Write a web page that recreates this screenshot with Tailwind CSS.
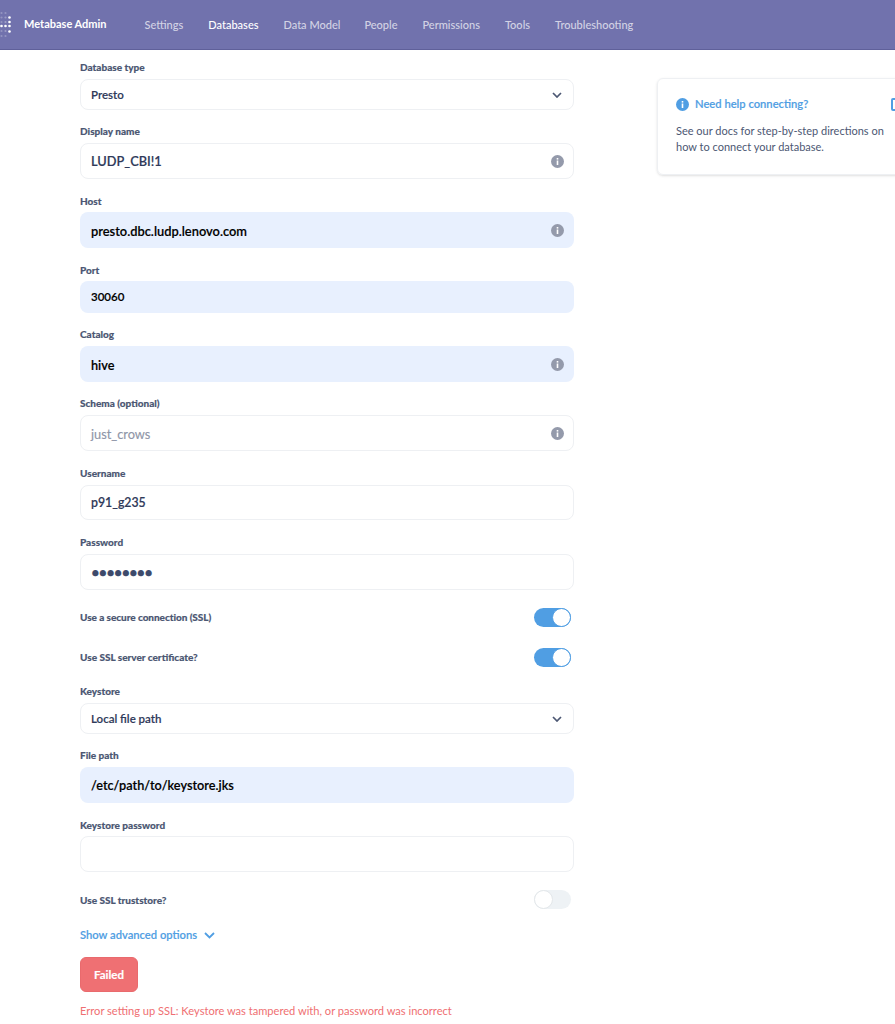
<!DOCTYPE html>
<html lang="en">
  <head>
    <meta charset="UTF-8" />
    <script src="https://cdn.jsdelivr.net/npm/@tailwindcss/browser@4"></script>
    <title>Metabase Admin</title>
  </head>
  <body class="h-[1024px] overflow-hidden bg-white font-['Lato',sans-serif] text-[#4c5773]">
    <nav class="h-[50px] bg-[#7172ad] border-b border-[#5f609a] flex items-center text-[11px] font-medium text-white/70">
      <svg class="w-[13px] h-[30px] shrink-0" viewBox="0 0 13 30" fill="#fff">
        <circle cx="1.5" cy="3" r="1.1" opacity=".25"/><circle cx="5.5" cy="3" r="1.1" opacity=".25"/>
        <circle cx="1.5" cy="7.5" r="1.1" opacity=".25"/><circle cx="5.5" cy="7.5" r="1.1" opacity=".3"/><circle cx="9.5" cy="7.5" r="1.3"/>
        <circle cx="1.5" cy="12" r="1.1" opacity=".25"/><circle cx="5.5" cy="12" r="1.1" opacity=".35"/><circle cx="9.5" cy="12" r="1.3"/>
        <circle cx="1.5" cy="16" r="1.3"/><circle cx="5.5" cy="16" r="1.3"/><circle cx="9.5" cy="16" r="1.3"/>
        <circle cx="1.5" cy="21" r="1.1" opacity=".25"/><circle cx="5.5" cy="21" r="1.1" opacity=".3"/><circle cx="9.5" cy="21.5" r="1.3"/>
        <circle cx="1.5" cy="26" r="1.1" opacity=".25"/><circle cx="5.5" cy="26" r="1.1" opacity=".25"/>
      </svg>
      <span class="ml-[11px] font-bold text-white">Metabase Admin</span>
      <span class="ml-[38px] pt-[1px]">Settings</span>
      <span class="ml-[25px] pt-[1px] text-white">Databases</span>
      <span class="ml-[25px] pt-[1px]">Data Model</span>
      <span class="ml-[24px] pt-[1px]">People</span>
      <span class="ml-[25px] pt-[1px]">Permissions</span>
      <span class="ml-[25px] pt-[1px]">Tools</span>
      <span class="ml-[25px] pt-[1px]">Troubleshooting</span>
    </nav>
    <main class="flex items-start">
      <form class="ml-[80px] w-[494px] shrink-0 pt-[9px] text-[11.5px] font-semibold [-webkit-text-stroke:0.15px]">
        <label class="block h-[16px] leading-[16px] text-[10px] font-black">Database type</label>
        <div class="mt-[4px] h-[31px] rounded-lg border border-[#eef0f3] flex items-center justify-between pl-[10px] pr-[11px] text-[#2f3a5a]">
          Presto
          <svg class="w-[10px] h-[6px]" viewBox="0 0 10 6" fill="none" stroke="#4c5773" stroke-width="1.7"><path d="M1 1l4 4 4-4"/></svg>
        </div>

        <label class="block mt-[13px] h-[16px] leading-[16px] text-[10px] font-black">Display name</label>
        <div class="mt-[4px] h-[36px] rounded-lg border border-[#eef0f3] flex items-center justify-between pl-[10px] pr-[9px] text-[12.8px] text-[#2f3a5a]">
          <span class="pt-[2px]">LUDP_CBI!1</span>
          <svg class="w-[13px] h-[13px]" viewBox="0 0 13 13"><circle cx="6.5" cy="6.5" r="6.5" fill="#949aab"/><rect x="5.7" y="5.5" width="1.6" height="4.5" fill="#fff"/><rect x="5.7" y="3" width="1.6" height="1.6" fill="#fff"/></svg>
        </div>

        <label class="block mt-[14px] h-[16px] leading-[16px] text-[10px] font-black">Host</label>
        <div class="mt-[3px] h-[36px] rounded-lg bg-[#e8f0fe] flex items-center justify-between pl-[11px] pr-[10px] text-[12.85px] text-black">
          <span class="pt-[3px]">presto.dbc.ludp.lenovo.com</span>
          <svg class="w-[13px] h-[13px]" viewBox="0 0 13 13"><circle cx="6.5" cy="6.5" r="6.5" fill="#949aab"/><rect x="5.7" y="5.5" width="1.6" height="4.5" fill="#fff"/><rect x="5.7" y="3" width="1.6" height="1.6" fill="#fff"/></svg>
        </div>

        <label class="block mt-[14px] h-[16px] leading-[16px] text-[10px] font-black">Port</label>
        <div class="mt-[3px] h-[32px] rounded-lg bg-[#e8f0fe] flex items-center pl-[11px] text-[11.5px] text-black">30060</div>

        <label class="block mt-[13px] h-[16px] leading-[16px] text-[10px] font-black">Catalog</label>
        <div class="mt-[4px] h-[36px] rounded-lg bg-[#e8f0fe] flex items-center justify-between pl-[11px] pr-[10px] text-[12.7px] text-black">
          <span class="pt-[3px]">hive</span>
          <svg class="w-[13px] h-[13px]" viewBox="0 0 13 13"><circle cx="6.5" cy="6.5" r="6.5" fill="#949aab"/><rect x="5.7" y="5.5" width="1.6" height="4.5" fill="#fff"/><rect x="5.7" y="3" width="1.6" height="1.6" fill="#fff"/></svg>
        </div>

        <label class="block mt-[13px] h-[16px] leading-[16px] text-[10px] font-black">Schema (optional)</label>
        <div class="mt-[4px] h-[36px] rounded-lg border border-[#eef0f3] flex items-center justify-between pl-[10px] pr-[9px] text-[12.8px] font-normal text-[#8f96a8]">
          <span class="pt-[3px]">just_crows</span>
          <svg class="w-[13px] h-[13px]" viewBox="0 0 13 13"><circle cx="6.5" cy="6.5" r="6.5" fill="#949aab"/><rect x="5.7" y="5.5" width="1.6" height="4.5" fill="#fff"/><rect x="5.7" y="3" width="1.6" height="1.6" fill="#fff"/></svg>
        </div>

        <label class="block mt-[14px] h-[16px] leading-[16px] text-[10px] font-black">Username</label>
        <div class="mt-[4px] h-[35px] rounded-lg border border-[#eef0f3] flex items-center pl-[10px] text-[12.3px] text-[#2f3a5a]"><span class="pt-[2px]">p91_g235</span></div>

        <label class="block mt-[14px] h-[16px] leading-[16px] text-[10px] font-black">Password</label>
        <div class="mt-[4px] h-[36px] rounded-lg border border-[#eef0f3] flex items-center pl-[10px] text-[15px] tracking-[-1.1px] text-[#3d4a6b]">••••••••</div>

        <div class="mt-[18px] h-[19px] flex items-center justify-between pr-[3px]">
          <span class="text-[10px] font-black tracking-[-0.05px]">Use a secure connection (SSL)</span>
          <span class="w-[37px] h-[19px] rounded-full bg-[#509ee3] flex justify-end"><span class="w-[19px] h-[19px] rounded-full bg-white border border-[#509ee3]"></span></span>
        </div>
        <div class="mt-[21px] h-[19px] flex items-center justify-between pr-[3px]">
          <span class="text-[10px] font-black">Use SSL server certificate?</span>
          <span class="w-[37px] h-[19px] rounded-full bg-[#509ee3] flex justify-end"><span class="w-[19px] h-[19px] rounded-full bg-white border border-[#509ee3]"></span></span>
        </div>

        <label class="block mt-[16px] h-[16px] leading-[16px] text-[10px] font-black">Keystore</label>
        <div class="mt-[4px] h-[31px] rounded-lg border border-[#eef0f3] flex items-center justify-between pl-[10px] pr-[11px] text-[#2f3a5a]">
          Local file path
          <svg class="w-[10px] h-[6px]" viewBox="0 0 10 6" fill="none" stroke="#4c5773" stroke-width="1.7"><path d="M1 1l4 4 4-4"/></svg>
        </div>

        <label class="block mt-[13px] h-[16px] leading-[16px] text-[10px] font-black">File path</label>
        <div class="mt-[4px] h-[36px] rounded-lg bg-[#e8f0fe] flex items-center pl-[11px] text-[12.7px] text-black"><span class="pt-[2px]">/etc/path/to/keystore.jks</span></div>

        <label class="block mt-[14px] h-[16px] leading-[16px] text-[10px] font-black">Keystore password</label>
        <div class="mt-[3px] h-[36px] rounded-lg border border-[#eef0f3]"></div>

        <div class="mt-[18px] h-[19px] flex items-center justify-between pr-[3px]">
          <span class="pt-[1px] text-[10px] font-black">Use SSL truststore?</span>
          <span class="w-[37px] h-[19px] rounded-full bg-[#eef2f5] flex"><span class="w-[19px] h-[19px] rounded-full bg-white border border-[#e3e7ea]"></span></span>
        </div>

        <div class="mt-[18px] flex items-center gap-[7px] text-[11.2px] font-semibold text-[#509ee3] leading-[16px]">
          Show advanced options
          <svg class="w-[11px] h-[7px]" viewBox="0 0 11 7" fill="none" stroke="#509ee3" stroke-width="1.8"><path d="M1 1l4.5 4.5L10 1"/></svg>
        </div>

        <div class="mt-[14px] w-[58px] h-[35px] rounded-md bg-[#ef7073] border border-[#e96a6d] flex items-center justify-center text-[11.5px] font-bold text-white">Failed</div>

        <p class="mt-[11px] text-[11.1px] font-normal leading-[16px] text-[#ef6f72] [-webkit-text-stroke:0px]">Error setting up SSL: Keystore was tampered with, or password was incorrect</p>
      </form>
      <aside class="ml-[83px] mt-[28px] w-[260px] h-[97px] shrink-0 rounded-md border border-[#eef0f3] shadow-sm pl-[18px] pt-[17px]">
        <div class="flex items-center text-[11.2px] font-semibold text-[#509ee3] leading-[16px] [-webkit-text-stroke:0.15px]">
          <svg class="w-[13px] h-[13px] mr-[6px]" viewBox="0 0 13 13"><circle cx="6.5" cy="6.5" r="6.5" fill="#509ee3"/><rect x="5.7" y="5.5" width="1.6" height="4.5" fill="#fff"/><rect x="5.7" y="3" width="1.6" height="1.6" fill="#fff"/></svg>
          Need help connecting?
          <span class="ml-[83px] w-[13px] h-[13px] rounded-[2px] border-2 border-[#509ee3]"></span>
        </div>
        <p class="mt-[11px] w-[215px] text-[11px] leading-[16px] text-[#4c5773]">See our docs for step-by-step directions on how to connect your database.</p>
      </aside>
    </main>
  </body>
</html>
